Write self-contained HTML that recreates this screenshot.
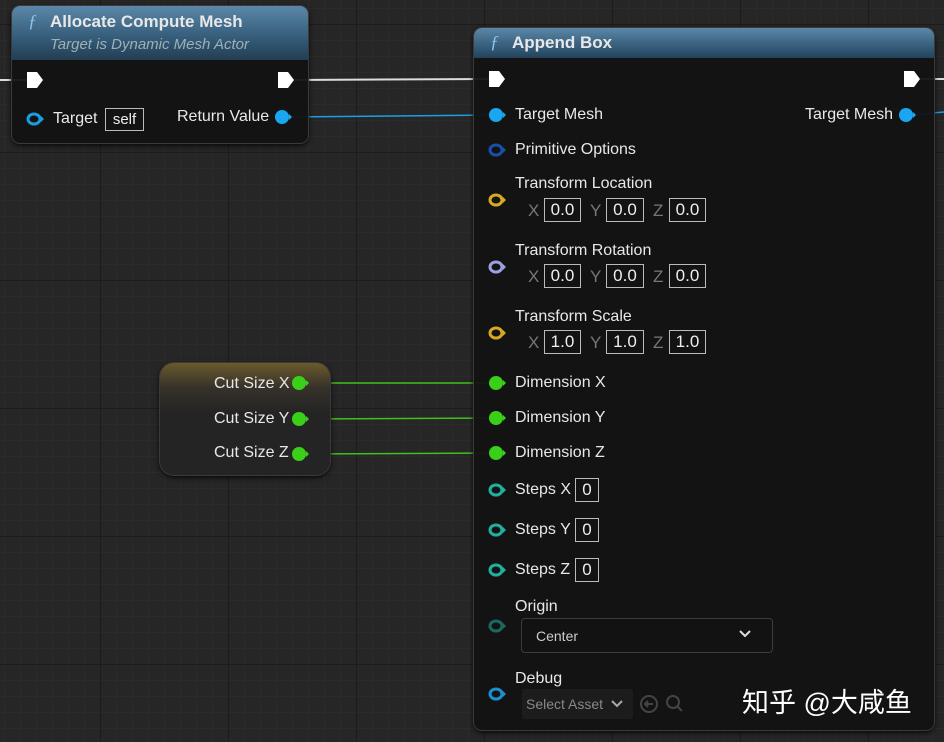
<!DOCTYPE html>
<html><head><meta charset="utf-8"><style>
*{margin:0;padding:0;box-sizing:border-box}
body{width:944px;height:742px;overflow:hidden;position:relative;font-family:"Liberation Sans","Noto Sans CJK SC",sans-serif;color:#e8e8e8;
background-color:#262626;
background-image:linear-gradient(#1c1c1c 1px,transparent 1px),linear-gradient(90deg,#1c1c1c 1px,transparent 1px),linear-gradient(#2b2b2b 1px,transparent 1px),linear-gradient(90deg,#2b2b2b 1px,transparent 1px);
background-size:128px 128px,128px 128px,16px 16px,16px 16px;background-position:-8px 24px,-28px 0,-8px 8px,4px 0}
.a{position:absolute}
.t{position:absolute;font-size:16px;white-space:nowrap;line-height:18px}
.node{position:absolute;background:rgba(18,18,18,.95);border-radius:8px;box-shadow:0 0 0 1px #3a3a3a,0 2px 6px #000}
.hdr{position:absolute;left:0;right:0;top:0;border-radius:8px 8px 0 0;background:linear-gradient(180deg,#5b87a8,#2e5470 70%,#243e52)}
.box{position:absolute;border:1px solid #bbb;height:24px;font-size:17px;text-align:center;line-height:22px;color:#eee}
.lt{position:absolute;font-size:17px;color:#777}
</style></head><body>
<svg class="a" style="left:0;top:0" width="944" height="742">
<line x1="0" y1="80" x2="30" y2="80" stroke="#ddd" stroke-width="2"/>
<line x1="290" y1="80" x2="490" y2="79" stroke="#ddd" stroke-width="2"/>
<line x1="920" y1="79" x2="944" y2="79" stroke="#ddd" stroke-width="2"/>
<line x1="285" y1="117" x2="497" y2="115" stroke="#1aa0e0" stroke-width="1.5"/>
<line x1="910" y1="115" x2="944" y2="112" stroke="#1aa0e0" stroke-width="1.5"/>
<line x1="302" y1="383" x2="497" y2="383" stroke="#3fc020" stroke-width="1.5"/>
<line x1="302" y1="419" x2="497" y2="418" stroke="#3fc020" stroke-width="1.5"/>
<line x1="302" y1="454" x2="497" y2="453" stroke="#3fc020" stroke-width="1.5"/>
</svg>

<div class="node" style="left:12px;top:6px;width:296px;height:137px">
<div class="hdr" style="height:54px"></div>
</div>
<div class="t" style="left:28px;top:12px;font-style:italic;font-family:'Liberation Serif',serif;color:#8cc4ee;font-size:18px">ƒ</div>
<div class="t" style="left:50px;top:13px;font-weight:bold;font-size:17px">Allocate Compute Mesh</div>
<div class="t" style="left:50px;top:36px;font-style:italic;color:#9fb0b4;font-size:15px">Target is Dynamic Mesh Actor</div>
<svg class="a" style="left:25px;top:70px" width="20" height="20"><path d="M2 2h10l6 8-6 8H2z" fill="#fff"/></svg>
<svg class="a" style="left:276px;top:70px" width="20" height="20"><path d="M2 2h10l6 8-6 8H2z" fill="#fff"/></svg>
<svg class="a" style="left:25px;top:111px" width="22" height="16"><ellipse cx="9" cy="8" rx="6" ry="5" fill="none" stroke="#1a9ee0" stroke-width="3"/><path d="M16 5l3 3-3 3z" fill="#1a9ee0"/></svg>
<div class="t" style="left:53px;top:110px">Target</div>
<div class="box" style="left:105px;top:108px;width:39px;height:23px;font-size:15px;line-height:21px">self</div>
<div class="t" style="left:177px;top:108px">Return Value</div>
<svg class="a" style="left:273px;top:109px" width="22" height="16"><circle cx="9" cy="8" r="7" fill="#1aa6f0"/><path d="M16 5l3 3-3 3z" fill="#1aa6f0"/></svg>

<div class="node" style="left:160px;top:363px;width:170px;height:112px;border-radius:14px;background:linear-gradient(180deg,#6a5a2c 0%,#36322a 22%,#242424 45%,#242424)"></div>
<div class="t" style="left:214px;top:375px">Cut Size X</div>
<div class="t" style="left:214px;top:410px">Cut Size Y</div>
<div class="t" style="left:214px;top:444px">Cut Size Z</div>
<svg class="a" style="left:290px;top:375px" width="22" height="90"><circle cx="9" cy="8" r="7" fill="#3ad01a"/><path d="M16 5l3 3-3 3z" fill="#3ad01a"/><circle cx="9" cy="44" r="7" fill="#3ad01a"/><path d="M16 41l3 3-3 3z" fill="#3ad01a"/><circle cx="9" cy="79" r="7" fill="#3ad01a"/><path d="M16 76l3 3-3 3z" fill="#3ad01a"/></svg>

<div class="node" style="left:474px;top:28px;width:460px;height:702px">
<div class="hdr" style="height:30px;background:linear-gradient(180deg,#5b87a8,#2e5470 75%,#244258)"></div>
</div>
<div class="t" style="left:490px;top:33px;font-style:italic;font-family:'Liberation Serif',serif;color:#8cc4ee;font-size:18px">ƒ</div>
<div class="t" style="left:512px;top:34px;font-weight:bold;font-size:17px">Append Box</div>
<svg class="a" style="left:487px;top:69px" width="20" height="20"><path d="M2 2h10l6 8-6 8H2z" fill="#fff"/></svg>
<svg class="a" style="left:902px;top:69px" width="20" height="20"><path d="M2 2h10l6 8-6 8H2z" fill="#fff"/></svg>

<svg class="a" style="left:487px;top:100px" width="24" height="610">
<g transform="translate(0,7)"><circle cx="9" cy="8" r="7" fill="#1aa6f0"/><path d="M16 5l3 3-3 3z" fill="#1aa6f0"/></g>
<g transform="translate(0,42)"><ellipse cx="9" cy="8" rx="6" ry="5" fill="none" stroke="#1a4ea8" stroke-width="3"/><path d="M16 5l3 3-3 3z" fill="#1a4ea8"/></g>
<g transform="translate(0,92)"><ellipse cx="9" cy="8" rx="6" ry="5" fill="none" stroke="#d8a820" stroke-width="3"/><path d="M16 5l3 3-3 3z" fill="#d8a820"/></g>
<g transform="translate(0,159)"><ellipse cx="9" cy="8" rx="6" ry="5" fill="none" stroke="#9aa0e0" stroke-width="3"/><path d="M16 5l3 3-3 3z" fill="#9aa0e0"/></g>
<g transform="translate(0,225)"><ellipse cx="9" cy="8" rx="6" ry="5" fill="none" stroke="#d8a820" stroke-width="3"/><path d="M16 5l3 3-3 3z" fill="#d8a820"/></g>
<g transform="translate(0,275)"><circle cx="9" cy="8" r="7" fill="#3ad01a"/><path d="M16 5l3 3-3 3z" fill="#3ad01a"/></g>
<g transform="translate(0,310)"><circle cx="9" cy="8" r="7" fill="#3ad01a"/><path d="M16 5l3 3-3 3z" fill="#3ad01a"/></g>
<g transform="translate(0,345)"><circle cx="9" cy="8" r="7" fill="#3ad01a"/><path d="M16 5l3 3-3 3z" fill="#3ad01a"/></g>
<g transform="translate(0,382)"><ellipse cx="9" cy="8" rx="6" ry="5" fill="none" stroke="#20b0a0" stroke-width="3"/><path d="M16 5l3 3-3 3z" fill="#20b0a0"/></g>
<g transform="translate(0,422)"><ellipse cx="9" cy="8" rx="6" ry="5" fill="none" stroke="#20b0a0" stroke-width="3"/><path d="M16 5l3 3-3 3z" fill="#20b0a0"/></g>
<g transform="translate(0,462)"><ellipse cx="9" cy="8" rx="6" ry="5" fill="none" stroke="#20b0a0" stroke-width="3"/><path d="M16 5l3 3-3 3z" fill="#20b0a0"/></g>
<g transform="translate(0,518)"><ellipse cx="9" cy="8" rx="6" ry="5" fill="none" stroke="#1a6a60" stroke-width="3"/><path d="M16 5l3 3-3 3z" fill="#1a6a60"/></g>
<g transform="translate(0,586)"><ellipse cx="9" cy="8" rx="6" ry="5" fill="none" stroke="#1a90d0" stroke-width="3"/><path d="M16 5l3 3-3 3z" fill="#1a90d0"/></g>
</svg>
<svg class="a" style="left:897px;top:107px" width="24" height="16"><circle cx="9" cy="8" r="7" fill="#1aa6f0"/><path d="M16 5l3 3-3 3z" fill="#1aa6f0"/></svg>

<div class="t" style="left:515px;top:106px">Target Mesh</div>
<div class="t" style="left:805px;top:106px">Target Mesh</div>
<div class="t" style="left:515px;top:141px">Primitive Options</div>
<div class="t" style="left:515px;top:175px">Transform Location</div>
<div class="t" style="left:515px;top:242px">Transform Rotation</div>
<div class="t" style="left:515px;top:308px">Transform Scale</div>

<div class="lt" style="left:528px;top:201px">X</div><div class="box" style="left:544px;top:198px;width:37px">0.0</div>
<div class="lt" style="left:590px;top:201px">Y</div><div class="box" style="left:606px;top:198px;width:38px">0.0</div>
<div class="lt" style="left:653px;top:201px">Z</div><div class="box" style="left:669px;top:198px;width:37px">0.0</div>

<div class="lt" style="left:528px;top:267px">X</div><div class="box" style="left:544px;top:264px;width:37px">0.0</div>
<div class="lt" style="left:590px;top:267px">Y</div><div class="box" style="left:606px;top:264px;width:38px">0.0</div>
<div class="lt" style="left:653px;top:267px">Z</div><div class="box" style="left:669px;top:264px;width:37px">0.0</div>

<div class="lt" style="left:528px;top:333px">X</div><div class="box" style="left:544px;top:330px;width:37px">1.0</div>
<div class="lt" style="left:590px;top:333px">Y</div><div class="box" style="left:606px;top:330px;width:38px">1.0</div>
<div class="lt" style="left:653px;top:333px">Z</div><div class="box" style="left:669px;top:330px;width:37px">1.0</div>

<div class="t" style="left:515px;top:374px">Dimension X</div>
<div class="t" style="left:515px;top:409px">Dimension Y</div>
<div class="t" style="left:515px;top:444px">Dimension Z</div>

<div class="t" style="left:515px;top:481px">Steps X</div><div class="box" style="left:575px;top:478px;width:24px">0</div>
<div class="t" style="left:515px;top:521px">Steps Y</div><div class="box" style="left:575px;top:518px;width:24px">0</div>
<div class="t" style="left:515px;top:561px">Steps Z</div><div class="box" style="left:575px;top:558px;width:24px">0</div>

<div class="t" style="left:515px;top:598px">Origin</div>
<div class="a" style="left:521px;top:618px;width:252px;height:35px;border:1px solid #3c3c3c;border-radius:4px;background:#121212"></div>
<div class="t" style="left:536px;top:627px;font-size:14px;color:#ccc">Center</div>
<svg class="a" style="left:738px;top:629px" width="14" height="10"><path d="M2 2l5 5 5-5" fill="none" stroke="#ddd" stroke-width="2"/></svg>

<div class="t" style="left:515px;top:670px">Debug</div>
<div class="a" style="left:522px;top:689px;width:111px;height:30px;background:#1c1c1c;border-radius:3px"></div>
<div class="t" style="left:526px;top:695px;font-size:14px;color:#888">Select Asset</div>
<svg class="a" style="left:610px;top:699px" width="14" height="10"><path d="M2 2l5 5 5-5" fill="none" stroke="#aaa" stroke-width="2"/></svg>
<svg class="a" style="left:638px;top:693px" width="50" height="22"><circle cx="11" cy="11" r="8" fill="none" stroke="#444" stroke-width="2"/><path d="M15 11H7m3-3l-3 3 3 3" fill="none" stroke="#444" stroke-width="2"/><circle cx="35" cy="9" r="6" fill="none" stroke="#444" stroke-width="2"/><path d="M39 13l5 5" stroke="#444" stroke-width="2"/></svg>

<div class="t" style="left:742px;top:686px;font-size:27px;line-height:34px;color:#fff;font-family:'Liberation Sans','Noto Sans CJK SC',sans-serif">知乎 @大咸鱼</div>
</body></html>
